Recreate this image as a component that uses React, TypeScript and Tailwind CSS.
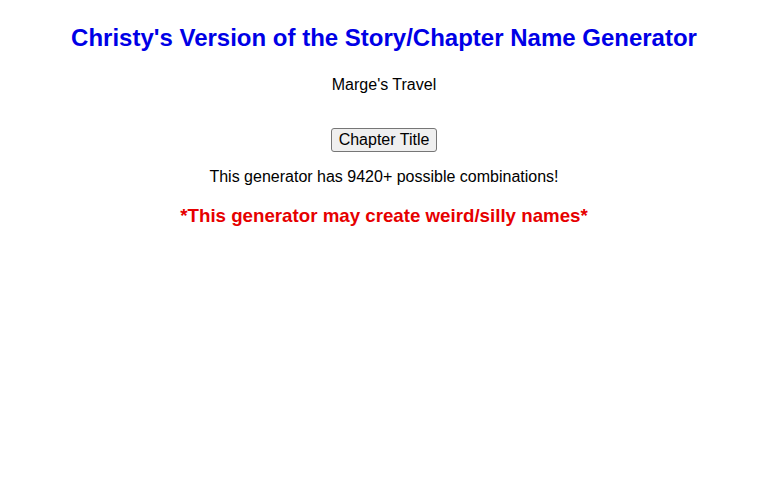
export default function App() {
  return (
    <div className="min-h-screen bg-white text-center text-black" style={{ fontFamily: '"Liberation Sans", Arial, sans-serif' }}>
      <h1 className="pt-[22px] text-[24px] font-bold leading-[32px] text-[#0000e6]">
        Christy's Version of the Story/Chapter Name Generator
      </h1>
      <p className="mt-[22px] text-[16px] leading-[18px]">Marge's Travel</p>
      <div className="mt-[34px]">
        <button className="rounded-[3px] border border-[#767676] bg-[#efefef] px-[7px] py-[1px] text-[16px] leading-[20px] text-black">
          Chapter Title
        </button>
      </div>
      <p className="mt-[16px] text-[16px] leading-[18px]">This generator has 9420+ possible combinations!</p>
      <p className="mt-[19px] text-[18.72px] font-bold leading-[22px] text-[#e60000]">
        *This generator may create weird/silly names*
      </p>
    </div>
  );
}
